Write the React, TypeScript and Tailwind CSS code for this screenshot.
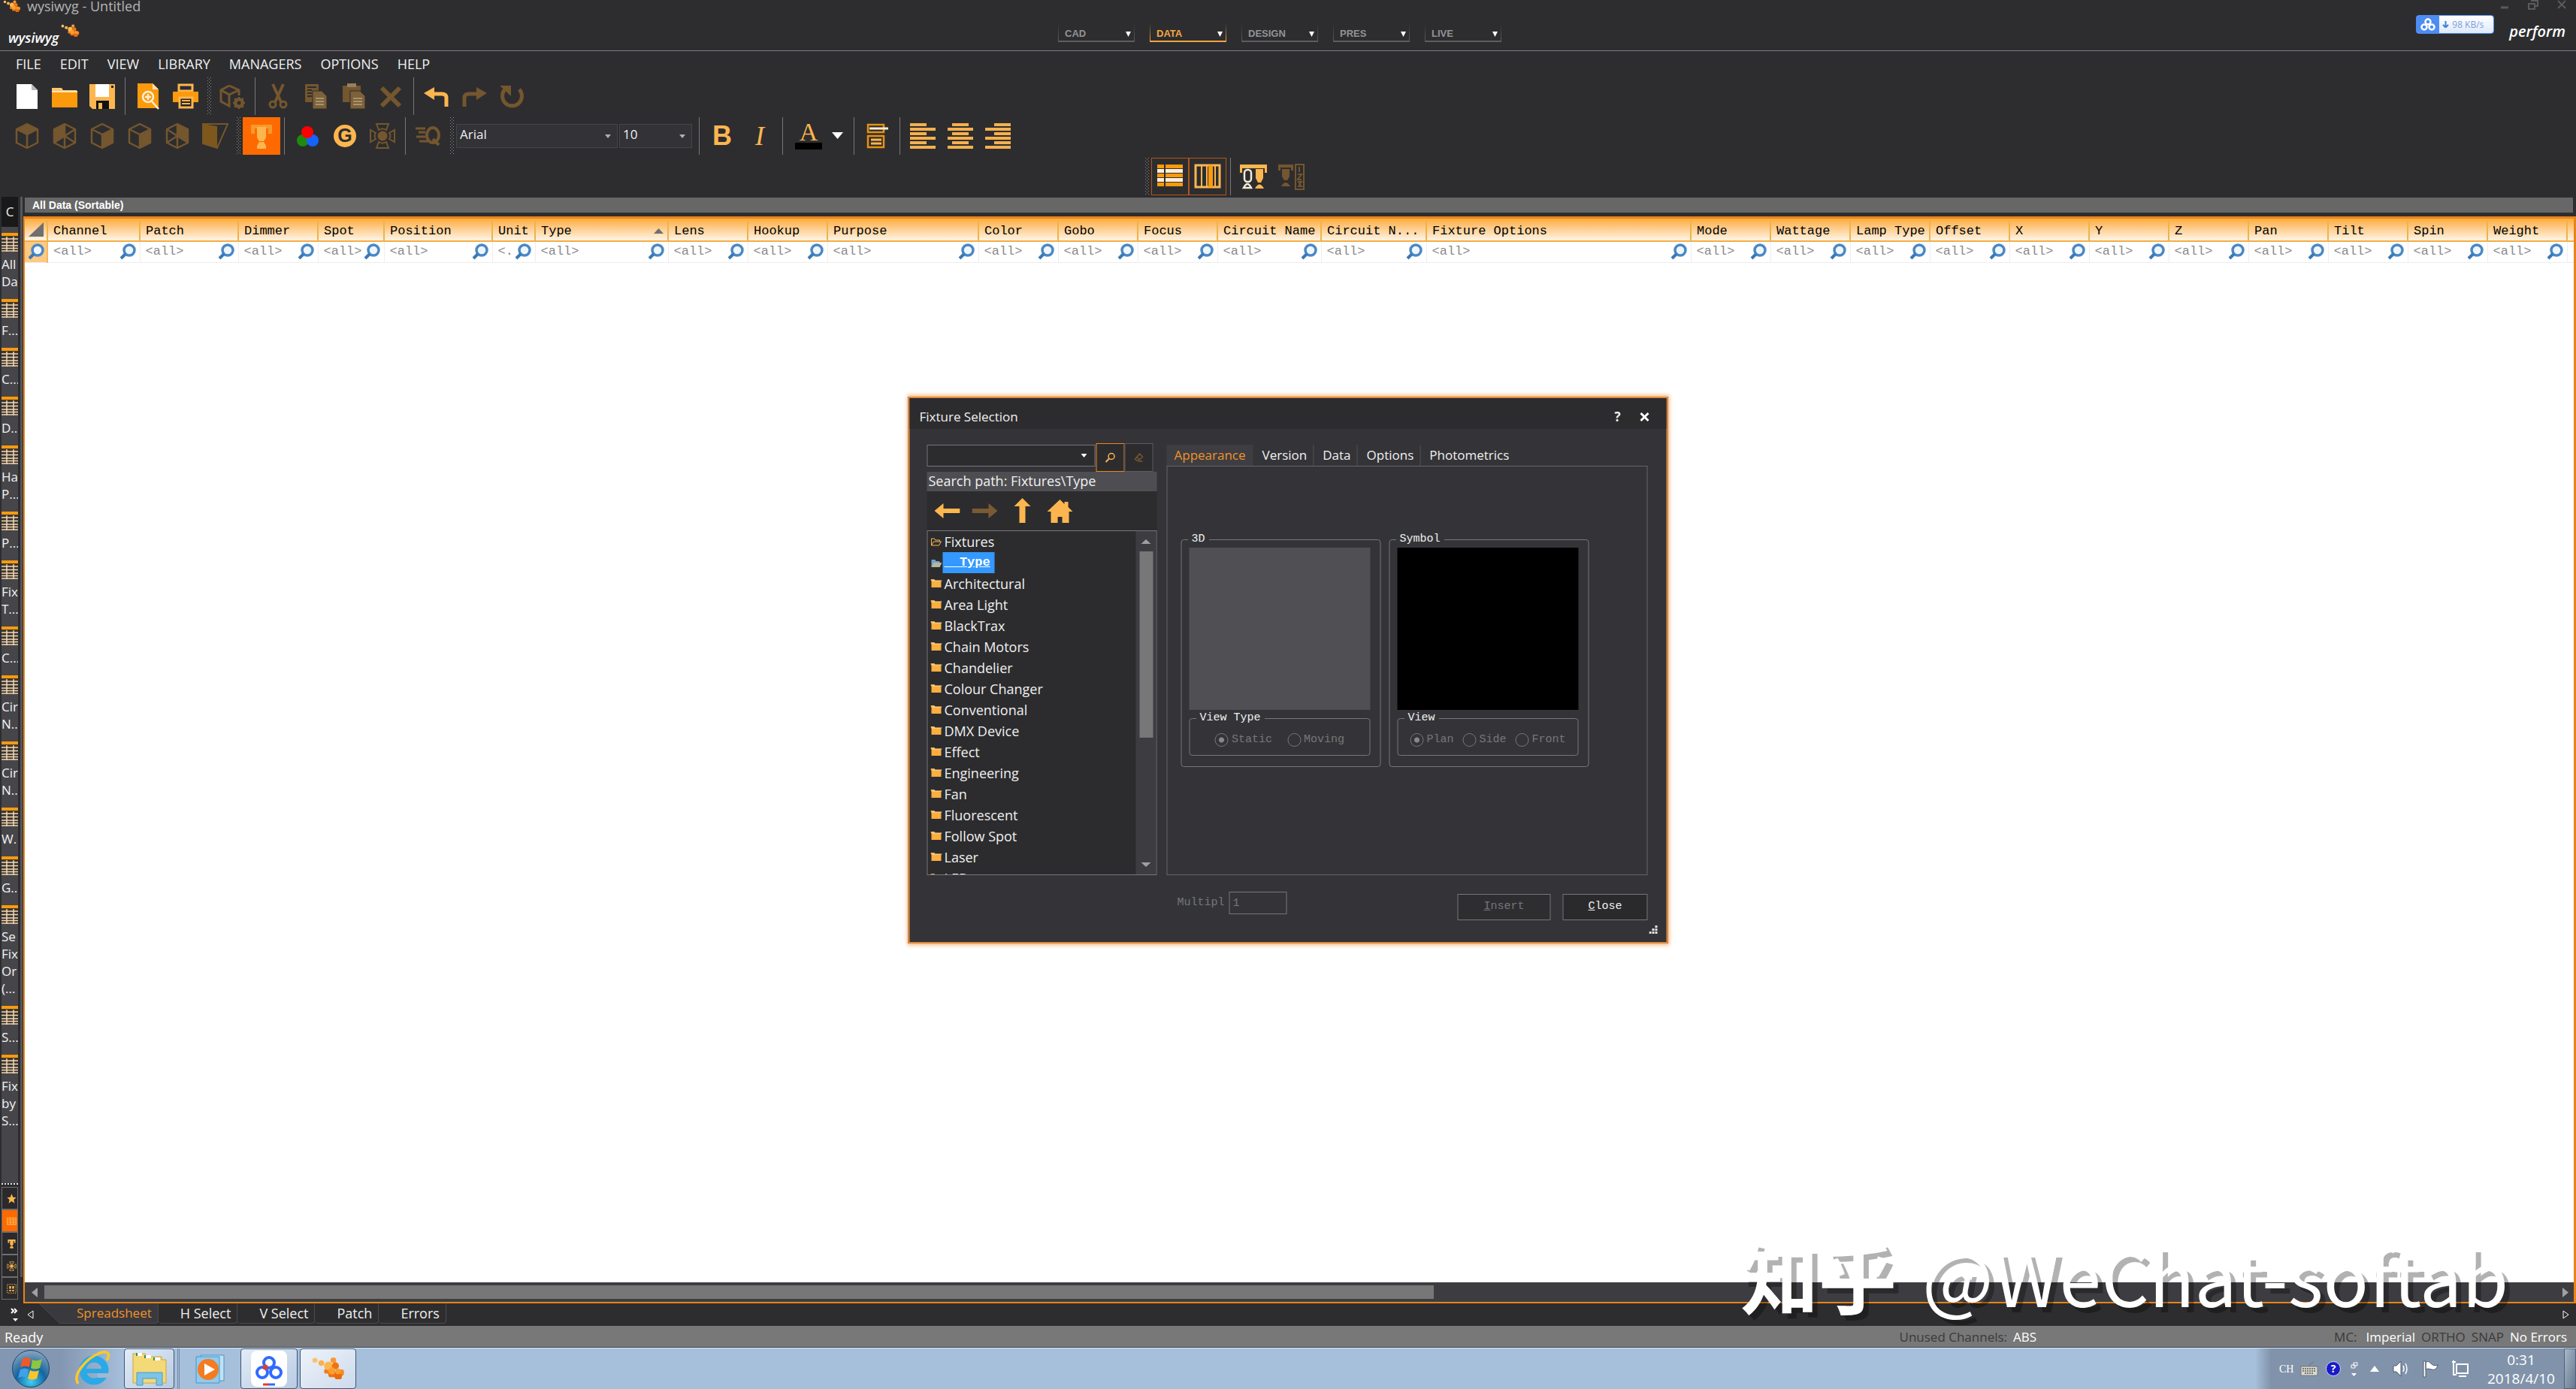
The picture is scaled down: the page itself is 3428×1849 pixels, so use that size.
import type { ReactNode } from 'react';

type Column = { label: string; width: number; filter?: string; sorted?: boolean };

const COLUMNS: Column[] = [
  { label: 'Channel', width: 123 },
  { label: 'Patch', width: 131 },
  { label: 'Dimmer', width: 106 },
  { label: 'Spot', width: 88 },
  { label: 'Position', width: 144 },
  { label: 'Unit', width: 57, filter: '<.' },
  { label: 'Type', width: 177, sorted: true },
  { label: 'Lens', width: 106 },
  { label: 'Hookup', width: 106 },
  { label: 'Purpose', width: 201 },
  { label: 'Color', width: 106 },
  { label: 'Gobo', width: 106 },
  { label: 'Focus', width: 106 },
  { label: 'Circuit Name', width: 138 },
  { label: 'Circuit N...', width: 140 },
  { label: 'Fixture Options', width: 352 },
  { label: 'Mode', width: 106 },
  { label: 'Wattage', width: 106 },
  { label: 'Lamp Type', width: 106 },
  { label: 'Offset', width: 106 },
  { label: 'X', width: 106 },
  { label: 'Y', width: 106 },
  { label: 'Z', width: 106 },
  { label: 'Pan', width: 106 },
  { label: 'Tilt', width: 106 },
  { label: 'Spin', width: 106 },
  { label: 'Weight', width: 106 },
];

const MENUS = ['FILE', 'EDIT', 'VIEW', 'LIBRARY', 'MANAGERS', 'OPTIONS', 'HELP'];
const MODES = ['CAD', 'DATA', 'DESIGN', 'PRES', 'LIVE'];
const SHORTCUTS = [
  ['All', 'Da'],
  ['F...'],
  ['C...'],
  ['D..'],
  ['Ha', 'P...'],
  ['P...'],
  ['Fix', 'T...'],
  ['C...'],
  ['Cir', 'N..'],
  ['Cir', 'N..'],
  ['W.'],
  ['G..'],
  ['Se', 'Fix', 'Or', '(...'],
  ['S...'],
  ['Fix', 'by', 'S...'],
];
const FOLDERS = [
  'Architectural',
  'Area Light',
  'BlackTrax',
  'Chain Motors',
  'Chandelier',
  'Colour Changer',
  'Conventional',
  'DMX Device',
  'Effect',
  'Engineering',
  'Fan',
  'Fluorescent',
  'Follow Spot',
  'Laser',
  'LED',
];
const SHEETS = ['H Select', 'V Select', 'Patch', 'Errors'];
const TABS = ['Version', 'Data', 'Options', 'Photometrics'];

const LIGHT = '#fdb64f';
const ORANGE = '#fb9a0c';
const DIM = '#74562f';
const DARK = '#2d2d2f';

const Svg = ({ children, size = 36, box = 36 }: { children: ReactNode; size?: number; box?: number }) => (
  <svg width={size} height={size} viewBox={`0 0 ${box} ${box}`} fill="none" aria-hidden="true">
    {children}
  </svg>
);

const Tool = ({ label, children, className = '' }: { label: string; children: ReactNode; className?: string }) => (
  <button aria-label={label} className={`flex h-[50px] w-[50px] shrink-0 items-center justify-center ${className}`}>
    {children}
  </button>
);

const Sep = () => (
  <div className="flex h-[50px] w-[11px] shrink-0 justify-center">
    <div className="w-px bg-[#77777a]" />
  </div>
);

const Grip = () => (
  <svg className="h-[50px] w-3 shrink-0" aria-hidden="true">
    <defs>
      <pattern id="grip" width="4" height="4" patternUnits="userSpaceOnUse">
        <rect width="1" height="1" fill="#88888a" />
        <rect x="2" y="2" width="1" height="1" fill="#88888a" />
      </pattern>
    </defs>
    <rect x="3" width="6" height="50" fill="url(#grip)" />
  </svg>
);

const Cube = ({ fill }: { fill: string }) => (
  <Svg>
    <path d={fill} fill={DIM} />
    <path
      d="M18 2 32 9V27L18 34 4 27V9ZM4 9 18 16 32 9M18 16V34"
      stroke={DIM}
      strokeWidth="2.5"
      strokeLinejoin="round"
    />
  </Svg>
);

const BackCube = ({ fill }: { fill: string }) => (
  <Svg>
    <path d={fill} fill={DIM} />
    <path
      d="M18 2 32 9V27L18 34 4 27V9ZM18 2V34M4 9 32 27M32 9 4 27"
      stroke={DIM}
      strokeWidth="2.5"
      strokeLinejoin="round"
    />
  </Svg>
);

const Lamp = ({ color }: { color: string }) => (
  <>
    <path d="M4 3H32V15H27V8H9V15H4Z" fill={color} />
    <path d="M12 6H24V20L21 25H15L12 20Z" fill={LIGHT} />
    <path d="M15 26H21L24 31V35H12V31Z" fill={LIGHT} />
  </>
);

const ParCan = ({ color }: { color: string }) => (
  <>
    <circle cx="18" cy="18" r="6.5" fill={color} />
    <path
      d="M10 2H26L23 10Q18 7 13 10ZM10 34H26L23 26Q18 29 13 26ZM2 10V26L9 22Q6 18 9 14ZM34 10V26L27 22Q30 18 27 14Z"
      stroke={color}
      strokeWidth="2"
    />
  </>
);

const Magnifier = () => (
  <svg width="22" height="22" viewBox="0 0 22 22" fill="none" className="shrink-0" aria-hidden="true">
    <circle cx="13" cy="9" r="7" fill="#eef6fd" stroke="#4a88c4" strokeWidth="3.5" />
    <path d="M8 14 2 20" stroke="#3c78b4" strokeWidth="4" />
  </svg>
);

const Sprinkle = ({ width, height }: { width: number; height: number }) => (
  <svg width={width} height={height} viewBox="0 0 48 34" aria-hidden="true">
    <circle cx="5" cy="5" r="3.5" fill="#fdc06a" />
    <circle cx="14" cy="9" r="4" fill="#fbb04c" />
    <circle cx="31" cy="5" r="4" fill="#f9983a" />
    <rect x="18" y="17" width="9" height="7" rx="3" fill="#f07d18" />
    <rect x="24" y="20" width="11" height="9" rx="3" fill="#ee7212" />
    <rect x="36" y="18" width="10" height="9" rx="3" fill="#f58a1f" />
    <rect x="33" y="24" width="10" height="8" rx="3" fill="#e9690c" />
    <circle cx="24" cy="13" r="6" fill="#fdb64f" />
    <circle cx="34" cy="13" r="5" fill="#ef7410" />
    <circle cx="29" cy="20" r="5" fill="#fba030" />
    <circle cx="38" cy="21" r="4" fill="#fb9a2c" />
  </svg>
);

const GridIcon = () => (
  <svg width="22" height="25" viewBox="0 0 22 25" aria-hidden="true">
    <rect width="22" height="25" fill="#3c3630" />
    <rect width="22" height="4" fill="#fb9a0c" />
    <path d="M0 8H22M0 12.500H22M0 17H22M0 20.500H22M0 24H22M7 5V25M16 5V25" stroke="#f3d9b4" strokeWidth="1.500" />
  </svg>
);

const Folder = () => (
  <svg width="15" height="12" viewBox="0 0 15 12" aria-hidden="true">
    <path d="M0 0H5L6 2H14V11H1V2H0Z" fill="#fdae3e" />
    <path d="M1 2H15" stroke="#ffe2b0" />
  </svg>
);

const Bars = ({ offsets }: { offsets: number[] }) => (
  <Svg>
    {offsets.map((x, i) => (
      <rect key={i} x={x} y={1 + i * 6} width={i % 2 ? 34 : 22} height="4" fill="#f5b04e" />
    ))}
  </Svg>
);

const TitleBar = () => (
  <header className="h-[68px] border-b border-[#7e7a82]">
    <div className="flex h-5 items-start justify-between pl-1">
      <div className="flex items-center gap-2">
        <Sprinkle width={24} height={17} />
        <h1 className="text-[18px] leading-[17px] text-[#b4b4b6]">wysiwyg - Untitled</h1>
      </div>
      <div className="flex items-center gap-6 pr-3 text-[#5b5b5e]">
        <button aria-label="Minimize">
          <Svg size={14} box={14}>
            <path d="M2 10H12" stroke="currentColor" strokeWidth="3" />
          </Svg>
        </button>
        <button aria-label="Restore">
          <Svg size={14} box={14}>
            <path d="M4 1H13V8H10M1 5H9V12H1Z" stroke="currentColor" strokeWidth="2" />
          </Svg>
        </button>
        <button aria-label="Close window">
          <Svg size={14} box={14}>
            <path d="M2 1 12 11M12 1 2 11" stroke="currentColor" strokeWidth="2" />
          </Svg>
        </button>
      </div>
    </div>
    <div className="flex h-12 items-start">
      <div className="flex w-[1408px] items-start pl-[11px] pt-3">
        <span className="pt-2 text-[18px] font-semibold italic leading-5 text-white">wysiwyg</span>
        <Sprinkle width={31} height={18} />
      </div>
      <nav aria-label="Modes" className="flex gap-5 pt-3">
        {MODES.map((mode) => (
          <button
            key={mode}
            className={`flex h-6 w-[102px] items-center justify-between border-x border-b-2 pl-2 pr-1 pt-1 font-['Liberation_Sans',sans-serif] text-[13px] font-bold ${
              mode === 'DATA'
                ? 'text-[#f5a742] [border-image:linear-gradient(to_top,#f5a742,transparent)_1]'
                : 'text-[#939395] [border-image:linear-gradient(to_top,#5e5e60,transparent)_1]'
            }`}
          >
            {mode}
            <svg width="7" height="8" viewBox="0 0 7 8" aria-hidden="true">
              <path d="M0 1H7L3.500 8Z" fill="#fff" />
            </svg>
          </button>
        ))}
      </nav>
      <div className="flex flex-1 items-start justify-end gap-5 pr-[14px]">
        <div className="flex h-[25px] w-[104px] overflow-hidden rounded-[4px] border border-[#4f8df0] bg-linear-to-b from-white to-[#dfe9fb]">
          <div className="flex w-[30px] items-center justify-center bg-[#4d8cf2]">
            <Svg size={20} box={20}>
              <circle cx="10" cy="6" r="3.500" stroke="#fff" strokeWidth="2.500" />
              <circle cx="5" cy="13" r="3.500" stroke="#fff" strokeWidth="2.500" />
              <circle cx="15" cy="13" r="3.500" stroke="#fff" strokeWidth="2.500" />
            </Svg>
          </div>
          <span className="flex items-center gap-1 pl-1 text-[12px] leading-5 text-[#7d9fd8]">
            <Svg size={9} box={9}>
              <path d="M4.500 0V8M1 5 4.500 8.500 8 5" stroke="#3a80d8" strokeWidth="2" />
            </Svg>
            98 KB/s
          </span>
        </div>
        <span className="pt-[10px] text-[20px] font-semibold italic leading-6 text-white">perform</span>
      </div>
    </div>
  </header>
);

const Toolbars = () => (
  <div className="flex h-[194px] flex-col">
    <nav aria-label="Main menu" className="flex h-[33px] items-center gap-[25px] pl-[21px]">
      {MENUS.map((item) => (
        <button key={item} className="text-[18px] leading-6 text-[#f0f0f0]">
          {item}
        </button>
      ))}
    </nav>
    <div className="flex h-[53px] items-center pl-[11px]">
      <Tool label="New">
        <Svg>
          <path d="M4 2H24L32 10V35H4Z" fill="#fff" />
          <path d="M24 2V10H32Z" fill="#b8b8b8" />
        </Svg>
      </Tool>
      <Tool label="Open">
        <Svg>
          <path d="M1 7H14L16 10H34V16H1Z" fill="#fdc46c" />
          <rect x="1" y="13" width="34" height="20" fill={ORANGE} />
          <path d="M1 12H35" stroke="#ffe6c0" strokeWidth="2" />
        </Svg>
      </Tool>
      <Tool label="Save">
        <Svg>
          <path d="M1 2H35V35H5L1 31Z" fill={LIGHT} />
          <rect x="9" y="2" width="18" height="17" fill="#fff" />
          <rect x="10" y="24" width="17" height="11" fill="#111" />
          <rect x="13" y="27" width="5" height="8" fill={LIGHT} />
          <rect x="30" y="4" width="3" height="3" fill="#222" />
        </Svg>
      </Tool>
      <Sep />
      <Tool label="Print preview">
        <Svg>
          <path d="M4 1H24L32 9V34H4Z" fill={ORANGE} />
          <path d="M24 1V9H32Z" fill="#ffe0b0" />
          <circle cx="18" cy="19" r="7" stroke="#fff0d8" strokeWidth="2.500" />
          <path d="M18 15V23M14 19H22M23 25 32 35" stroke="#fff0d8" strokeWidth="2.500" />
        </Svg>
      </Tool>
      <Tool label="Print">
        <Svg>
          <path d="M9 3H27V11H9Z" stroke={LIGHT} strokeWidth="3" />
          <path d="M1 12H35V26H1Z" fill={ORANGE} />
          <rect x="10" y="20" width="17" height="13" fill="#222" stroke={LIGHT} strokeWidth="3" />
          <path d="M13 24H24M13 28H24" stroke={LIGHT} strokeWidth="2" />
        </Svg>
      </Tool>
      <Grip />
      <Tool label="Cube options">
        <Svg>
          <path d="M14 4 27 10V17M14 4 3 10V25L14 31V16L3 10M14 16 27 10" stroke={DIM} strokeWidth="3" />
          <circle cx="27" cy="27" r="5" stroke={DIM} strokeWidth="4" />
          <path d="M27 19V35M19 27H35M21 21 33 33M33 21 21 33" stroke={DIM} strokeWidth="2" />
          <circle cx="27" cy="27" r="2.500" fill={DARK} />
        </Svg>
      </Tool>
      <Sep />
      <Tool label="Cut">
        <Svg>
          <path d="M11 2 22 26M25 2 14 26" stroke={DIM} strokeWidth="4" />
          <circle cx="11" cy="29" r="4" stroke={DIM} strokeWidth="3" />
          <circle cx="25" cy="29" r="4" stroke={DIM} strokeWidth="3" />
        </Svg>
      </Tool>
      <Tool label="Copy">
        <Svg>
          <path d="M4 2H22V26H4Z" fill={DIM} />
          <path d="M7 6H19M7 10H13M7 14H13M7 18H13" stroke={DARK} strokeWidth="2" />
          <path d="M14 11H26L33 18V35H14Z" fill="#7d6138" stroke={DARK} />
          <path d="M18 21H29M18 25H29M18 29H29" stroke="#a79372" strokeWidth="2" />
        </Svg>
      </Tool>
      <Tool label="Paste">
        <Svg>
          <path d="M4 4H28V26H4Z" fill={DIM} />
          <rect x="10" y="1" width="12" height="5" fill="#9a8058" />
          <path d="M14 11H27L34 18V35H14Z" fill="#7d6138" stroke={DARK} />
          <path d="M18 21H30M18 25H30M18 29H30" stroke="#a79372" strokeWidth="2" />
        </Svg>
      </Tool>
      <Tool label="Delete">
        <Svg>
          <path d="M6 7 30 31M30 7 6 31" stroke={DIM} strokeWidth="6" />
        </Svg>
      </Tool>
      <Sep />
      <Tool label="Undo">
        <Svg>
          <path d="M12 15H25Q31 15 31 20V32" stroke={LIGHT} strokeWidth="5" />
          <path d="M1 14 15 6V23Z" fill={LIGHT} />
        </Svg>
      </Tool>
      <Tool label="Redo">
        <Svg>
          <path d="M24 15H11Q5 15 5 20V32" stroke={DIM} strokeWidth="5" />
          <path d="M35 14 21 6V23Z" fill={DIM} />
        </Svg>
      </Tool>
      <Tool label="Refresh">
        <Svg>
          <path d="M9 9A13 13 0 1 0 28 9" stroke={DIM} strokeWidth="5" />
          <path d="M2 4H17V18Z" fill={DIM} />
        </Svg>
      </Tool>
    </div>
    <div className="flex h-[53px] items-center pl-[11px]">
      <Tool label="Top view">
        <Cube fill="M18 2 32 9 18 16 4 9Z" />
      </Tool>
      <Tool label="Back view">
        <BackCube fill="M18 2V18L4 27V9Z" />
      </Tool>
      <Tool label="Right view">
        <Cube fill="M18 16 32 9V27L18 34Z" />
      </Tool>
      <Tool label="Front view">
        <Cube fill="M18 16 32 9V27L18 34Z" />
      </Tool>
      <Tool label="Left view">
        <BackCube fill="M18 2 32 9V27L18 18Z" />
      </Tool>
      <Tool label="Isometric view">
        <Svg>
          <path d="M2 2H35L21 34L2 28Z" stroke={DIM} strokeWidth="2" />
          <path d="M2 2 21 5V34L2 28Z" fill="#7d571c" />
        </Svg>
      </Tool>
      <Grip />
      <Tool label="Fixtures" className="bg-[#ff6a00]">
        <Svg>
          <Lamp color="#f59a2c" />
        </Svg>
      </Tool>
      <Sep />
      <Tool label="Color">
        <Svg>
          <circle cx="12" cy="24" r="8" fill="#1e8a10" />
          <circle cx="25" cy="24" r="8" fill="#1463ff" />
          <circle cx="18" cy="13" r="8" fill="#f00" />
        </Svg>
      </Tool>
      <Tool label="Gobo">
        <span className="flex h-[30px] w-[30px] items-center justify-center rounded-full bg-[#fdb64f] font-['Liberation_Sans',sans-serif] text-[25px] font-bold leading-none text-[#2d2d2f]">
          G
        </span>
      </Tool>
      <Tool label="Focus">
        <Svg>
          <ParCan color={DIM} />
        </Svg>
      </Tool>
      <Sep />
      <Tool label="Quick query">
        <Svg>
          <path d="M1 8H14M5 13H14M2 19H14M6 25H18" stroke={DIM} strokeWidth="3" />
          <ellipse cx="24" cy="17" rx="8" ry="10" stroke={DIM} strokeWidth="4" />
          <path d="M24 22 32 30" stroke={DIM} strokeWidth="4" />
        </Svg>
      </Tool>
      <Grip />
      <div className="mr-1 flex gap-[2px]">
        <Combo label="Font" value="Arial" className="w-[215px]" />
        <Combo label="Font size" value="10" className="w-[97px]" />
      </div>
      <Sep />
      <Tool label="Bold" className="font-['Liberation_Sans',sans-serif] text-[36px] font-bold leading-none text-[#fdb64f]">
        B
      </Tool>
      <Tool label="Italic" className="font-['Liberation_Serif',serif] text-[36px] italic leading-none text-[#fdb64f]">
        I
      </Tool>
      <Sep />
      <Tool label="Text color" className="flex-col pl-2">
        <span className="font-['Liberation_Serif',serif] text-[34px] leading-7 text-[#fdb64f]">A</span>
        <span className="h-[9px] w-9 bg-black" />
      </Tool>
      <button aria-label="Text color menu" className="flex h-[50px] w-[34px] items-center justify-center">
        <svg width="15" height="9" viewBox="0 0 15 9" aria-hidden="true">
          <path d="M0 0H15L7.500 9Z" fill="#fff" />
        </svg>
      </button>
      <Sep />
      <Tool label="Line spacing">
        <Svg>
          <rect x="6" y="3" width="21" height="10" stroke="#e8910f" strokeWidth="2.500" />
          <path d="M8 8H33" stroke="#ffeed0" strokeWidth="3" />
          <rect x="6" y="18" width="21" height="15" stroke="#e8910f" strokeWidth="2.500" />
          <path d="M10 23H24M10 28H24" stroke={LIGHT} strokeWidth="3" />
        </Svg>
      </Tool>
      <Sep />
      <Tool label="Align left">
        <Bars offsets={[1, 1, 1, 1, 1, 1]} />
      </Tool>
      <Tool label="Align center">
        <Bars offsets={[7, 1, 7, 1, 7, 1]} />
      </Tool>
      <Tool label="Align right">
        <Bars offsets={[13, 1, 13, 1, 13, 1]} />
      </Tool>
    </div>
    <div className="flex h-[55px] items-center pl-[1520px]">
      <Grip />
      <Tool label="Rows" className="border border-[#b4561a]">
        <Svg>
          {[2, 8, 14, 20, 26].map((y, i) => (
            <rect key={y} x="1" y={y} width="34" height="5" fill={i % 2 ? '#ffeeda' : ORANGE} />
          ))}
          <path d="M11 1V33" stroke={DARK} strokeWidth="2" />
        </Svg>
      </Tool>
      <Tool label="Columns" className="border border-[#b4561a]">
        <Svg>
          <rect x="2" y="3" width="32" height="29" stroke={LIGHT} strokeWidth="3" />
          <path d="M10 3V32M17 3V32M28 3V32" stroke={LIGHT} strokeWidth="2" />
          <path d="M22 3V32" stroke={ORANGE} strokeWidth="6" />
        </Svg>
      </Tool>
      <Sep />
      <Tool label="Show fixtures">
        <Svg>
          <path d="M0 2H36V13H33V7H3V13H0Z" fill={LIGHT} />
          <rect x="6" y="9" width="9" height="16" rx="4" stroke="#f3ead8" strokeWidth="2.500" />
          <path d="M5 33Q10 23 15 33Z" stroke="#f3ead8" strokeWidth="2.500" />
          <path d="M21 8H31V20L28 26H24L21 20Z" fill={LIGHT} />
          <path d="M20 34Q26 23 32 34Z" fill={LIGHT} />
        </Svg>
      </Tool>
      <Tool label="Number fixtures">
        <Svg>
          <path d="M1 2H21V10H18V6H4V10H1Z" fill={DIM} />
          <path d="M6 8H16V18L13 23H9L6 18Z" fill={DIM} />
          <path d="M5 31Q11 21 17 31Z" fill={DIM} />
          <rect x="24" y="2" width="11" height="33" stroke={DIM} strokeWidth="2" />
          <path d="M29 5V12M27 15H32L27 22H32M27 25H32L29 28 32 31H27" stroke={DIM} strokeWidth="2" />
        </Svg>
      </Tool>
    </div>
  </div>
);

function Combo({ label, value, className }: { label: string; value: string; className: string }) {
  return (
    <div className={`relative h-8 border border-[#444449] bg-[#323237] ${className}`}>
      <select
        aria-label={label}
        defaultValue={value}
        className="h-full w-full appearance-none pl-1 pb-1 text-[17px] leading-6 text-[#f0f0f0]"
      >
        <option>{value}</option>
      </select>
      <svg className="pointer-events-none absolute right-2 top-[13px]" width="8" height="5" viewBox="0 0 8 5" aria-hidden="true">
        <path d="M0 0H8L4 5Z" fill="#b0b0b2" />
      </svg>
    </div>
  );
}

const Sidebar = () => (
  <aside className="flex w-[31px] shrink-0 pl-[2px]">
    <div className="flex w-[22px] flex-col">
      <div className="flex h-[40px] items-center justify-center bg-[#19191a] text-[17px]">C</div>
      <div className="flex flex-1 flex-col overflow-hidden bg-[#46464a] pt-2">
        {SHORTCUTS.map((lines, i) => (
          <button key={i} className="mb-3 flex flex-col gap-[5px] overflow-hidden text-left">
            <GridIcon />
            <span className="text-[17px] leading-[23px] text-[#f2f2f2]">
              {lines.map((line, j) => (
                <span key={j} className="block whitespace-nowrap">
                  {line}
                </span>
              ))}
            </span>
          </button>
        ))}
      </div>
      <div className="h-[5px] border-t-2 border-dotted border-[#e0e0e0] bg-[#2d2d2f]" />
      {['Favorites', 'Data', 'Lamps', 'Focus', 'Groups'].map((name) => (
        <button
          key={name}
          aria-label={name}
          className={`flex h-[30px] items-center justify-end border border-[#6e6e72] pr-px ${
            name === 'Data' ? 'bg-[#ff6a00]' : 'bg-[#2a2a2c]'
          }`}
        >
          <Svg size={13}>
            {name === 'Favorites' && <path d="M18 1 23 13 35 14 26 22 29 35 18 28 7 35 10 22 1 14 13 13Z" fill={LIGHT} />}
            {name === 'Data' && (
              <path d="M2 6H34V30H2ZM2 14H34M2 22H34M13 6V30M24 6V30" stroke={LIGHT} strokeWidth="3" />
            )}
            {name === 'Lamps' && <Lamp color={LIGHT} />}
            {name === 'Focus' && <ParCan color={LIGHT} />}
            {name === 'Groups' && (
              <>
                <rect x="2" y="2" width="32" height="32" stroke={LIGHT} strokeWidth="3" strokeDasharray="4 4" />
                <path d="M9 8H16V18H9ZM20 8H27V18H20ZM9 22H16V28H9ZM20 22H27V28H20Z" fill={LIGHT} />
              </>
            )}
          </Svg>
        </button>
      ))}
      <button aria-label="More" className="flex h-[35px] items-center justify-end">
        <svg width="10" height="26" viewBox="0 0 10 26" fill="none" aria-hidden="true">
          <path d="M1 7 4 10 1 13M5 7 8 10 5 13" stroke="#fff" strokeWidth="2" />
          <path d="M3 20H10L6.500 24Z" fill="#fff" />
        </svg>
      </button>
    </div>
    <div className="mb-[65px] ml-[3px] w-[3px] bg-[#57575b]" />
  </aside>
);

const Spreadsheet = () => (
  <div className="flex min-h-0 flex-1 flex-col border-2 border-r-[3px] border-t-[3px] border-[#e8841a] bg-white">
    <table className="w-full table-fixed border-collapse font-['Liberation_Mono',monospace] text-[17px]">
      <colgroup>
        <col className="w-[30px]" />
        {COLUMNS.map((c) => (
          <col key={c.label} style={{ width: c.width }} />
        ))}
        <col />
      </colgroup>
      <thead>
        <tr className="h-[30px] border-b border-[#e8ae50] bg-linear-to-b from-[#fdab35] via-[#fed093] to-[#fff5e6] text-black">
          <th className="border-r-2 border-[#eeb44a] p-0" aria-label="Select all">
            <svg width="22" height="22" viewBox="0 0 22 22" className="ml-1" aria-hidden="true">
              <path d="M21 1V20H1Z" fill="#6f6f6f" />
            </svg>
          </th>
          {COLUMNS.map((c) => (
            <th key={c.label} scope="col" className="border-r-2 border-[#eeb44a] pb-0 pl-[7px] pr-0 pt-[3px] text-left font-normal">
              <div className="flex items-center justify-between overflow-hidden whitespace-nowrap">
                {c.label}
                {c.sorted && (
                  <svg width="13" height="7" viewBox="0 0 13 7" className="mr-[5px]" aria-hidden="true">
                    <path d="M6.500 0 13 7H0Z" fill="#6f6f6f" />
                  </svg>
                )}
              </div>
            </th>
          ))}
          <th className="p-0" />
        </tr>
      </thead>
      <tbody>
        <tr className="h-[28px] border-b border-[#ececec]">
          <td className="border-r-2 border-[#f6b863] bg-[#fdc983] p-0">
            <div className="flex justify-center">
              <Magnifier />
            </div>
          </td>
          {COLUMNS.map((c) => (
            <td key={c.label} className="border-r border-[#eeeeee] py-0 pl-[7px] pr-[5px]">
              <div className="flex items-center">
                <input
                  aria-label={`Filter ${c.label}`}
                  placeholder={c.filter ?? '<all>'}
                  className="h-6 w-0 min-w-0 flex-1 text-black outline-none placeholder:text-[#8a8a8a]"
                />
                <Magnifier />
              </div>
            </td>
          ))}
          <td className="p-0" />
        </tr>
      </tbody>
    </table>
    <div className="flex-1" />
    <div className="flex h-[26px] items-center bg-[#3d3d41]">
      <div className="flex w-[26px] justify-center">
        <svg width="8" height="13" viewBox="0 0 8 13" aria-hidden="true">
          <path d="M8 0V13L0 6.500Z" fill="#a0a0a2" />
        </svg>
      </div>
      <div className="h-[18px] w-[54.5%] bg-[#777777]" />
      <div className="ml-auto flex w-[22px] justify-center">
        <svg width="8" height="13" viewBox="0 0 8 13" aria-hidden="true">
          <path d="M0 0V13L8 6.500Z" fill="#a0a0a2" />
        </svg>
      </div>
    </div>
  </div>
);

const SheetTabs = () => (
  <div className="flex h-[30px] items-start justify-between bg-[#2d2d2f]">
    <div className="flex items-start">
      <button aria-label="Previous sheets" className="flex h-[30px] w-[21px] items-center pl-1">
        <Svg size={12} box={12}>
          <path d="M9 1V11L2 6Z" stroke="#fff" />
        </Svg>
      </button>
      <svg width="28" height="27" viewBox="0 0 28 27" aria-hidden="true">
        <path d="M0 0H28V27Z" fill="#3a3a3e" />
        <path d="M0 0 28 27" stroke="#4c4c50" />
      </svg>
      <button className="h-[27px] rounded-br border-b border-r border-[#4c4c50] bg-[#3a3a3e] pl-[22px] pr-2 text-[17px] leading-6 text-[#f0922a]">
        Spreadsheet
      </button>
      {SHEETS.map((name) => (
        <button key={name} className="h-[27px] rounded-b border-b border-r border-[#4c4c50] pl-[29px] pr-2 text-[18px] leading-6 text-[#f0f0f0]">
          {name}
        </button>
      ))}
    </div>
    <button aria-label="Next sheets" className="flex h-[30px] w-5 items-center">
      <Svg size={12} box={12}>
        <path d="M3 1V11L10 6Z" stroke="#fff" />
      </Svg>
    </button>
  </div>
);

const Group = ({ title, children, className }: { title: string; children: ReactNode; className: string }) => (
  <fieldset className={`rounded-[4px] border border-[#77777a] ${className}`}>
    <legend className="ml-2 px-[5px] text-[15px] leading-[22px] text-[#efefef]">{title}</legend>
    {children}
  </fieldset>
);

const Radio = ({ name, label, checked = false }: { name: string; label: string; checked?: boolean }) => (
  <label className="flex items-center gap-1 text-[15px] leading-5 text-[#77777a]">
    <input
      type="radio"
      name={name}
      defaultChecked={checked}
      disabled
      className="h-[18px] w-[18px] appearance-none rounded-full border border-[#77777a] checked:bg-[radial-gradient(circle,#88888a_3px,transparent_4px)]"
    />
    {label}
  </label>
);

const FixtureDialog = () => (
  <section
    role="dialog"
    aria-label="Fixture Selection"
    className="absolute left-1/2 top-[528px] w-[1011px] -translate-x-1/2 border-2 border-[#e08a3a] bg-[#343438] pb-[29px] text-[17px] text-[#f0f0f0] shadow-[0_0_5px_2px_#f8b47a]"
  >
    <header className="flex h-[41px] items-center justify-between bg-[#2c2c2e] pl-[13px] pr-[22px] pt-2">
      <h2 className="leading-6">Fixture Selection</h2>
      <div className="flex items-center gap-[25px]">
        <button aria-label="Help" className="font-bold leading-6">
          ?
        </button>
        <button aria-label="Close dialog">
          <Svg size={14} box={14}>
            <path d="M2 2 12 12M12 2 2 12" stroke="#fff" strokeWidth="3" />
          </Svg>
        </button>
      </div>
    </header>
    <div className="flex gap-[13px] pl-[23px] pr-[25px] pt-[19px]">
      <div className="w-[306px] shrink-0">
        <div className="flex h-[38px] items-start">
          <div className="relative mr-px mt-[2px] h-[29px] w-[224px]">
            <input aria-label="Search fixtures" className="h-full w-full border border-[#77777a] bg-[#2c2c2e] px-1 outline-none" />
            <svg className="pointer-events-none absolute right-[11px] top-3" width="8" height="5" viewBox="0 0 8 5" aria-hidden="true">
              <path d="M0 0H8L4 5Z" fill="#fff" />
            </svg>
          </div>
          <button aria-label="Search" className="flex h-[38px] w-[38px] items-center justify-center border border-[#e8871f] bg-[#2c2c2e]">
            <Svg size={14} box={14}>
              <circle cx="8.500" cy="5.500" r="4" stroke={LIGHT} strokeWidth="1.500" />
              <path d="M5.500 8.500 1 13" stroke={LIGHT} strokeWidth="2" />
            </Svg>
          </button>
          <button aria-label="Clear search" className="flex h-[38px] w-[38px] items-center justify-center border border-[#5c5c60] bg-[#2c2c2e]">
            <Svg size={14} box={14}>
              <path d="M8 2 12 6 7 11H4L2 9ZM4 6 8 10M6 12H12" stroke={DIM} strokeWidth="1.500" />
            </Svg>
          </button>
        </div>
        <p className="h-[26px] bg-[#4e4e52] pl-[2px] text-[18px] leading-[25px]">Search path: Fixtures\Type</p>
        <div className="flex h-[52px] items-center gap-4 bg-[#2c2c2e] pl-[10px]">
          <button aria-label="Back">
            <Svg size={34} box={34}>
              <path d="M0 17 12 7V14H34V20H12V27Z" fill={LIGHT} />
            </Svg>
          </button>
          <button aria-label="Forward">
            <Svg size={34} box={34}>
              <path d="M34 17 22 7V14H0V20H22V27Z" fill="#7a5a33" />
            </Svg>
          </button>
          <button aria-label="Up">
            <Svg size={34} box={34}>
              <path d="M17 0 28 11H21V33H13V11H6Z" fill={LIGHT} />
            </Svg>
          </button>
          <button aria-label="Home">
            <Svg size={34} box={34}>
              <path d="M17 2 23 8V5H28V12L34 18H29V33H20V25H14V33H5V18H0Z" fill={LIGHT} />
            </Svg>
          </button>
        </div>
        <div className="flex h-[459px] justify-between overflow-hidden border border-[#77777a] bg-[#2c2c2e]">
          <ul className="pl-1 text-[18px] leading-[28px]">
            <li className="flex items-center gap-[3px]">
              <Svg size={15} box={15}>
                <path d="M1 12V3H5L6 5H12V7M1 12 4 7H14L11 12Z" stroke={LIGHT} />
              </Svg>
              Fixtures
            </li>
            <li className="flex items-center">
              <svg width="16" height="13" viewBox="0 0 16 13" aria-hidden="true">
                <path d="M1 12V2H6L7 4H12V6" fill="#6fa3cc" />
                <path d="M1 12 4 6H15L12 12Z" fill="#b6b6a0" />
              </svg>
              <button className="h-[28px] whitespace-pre bg-[#3399ff] pl-[2px] pr-[6px] font-['Liberation_Mono',monospace] text-[17px] font-bold leading-[28px] text-white underline">
                {'  Type'}
              </button>
            </li>
            {FOLDERS.map((name) => (
              <li key={name} className="flex h-[28px] items-center gap-[3px]">
                <Folder />
                {name}
              </li>
            ))}
          </ul>
          <div className="flex w-[27px] flex-col items-center bg-[#3d3d41]">
            <svg width="27" height="27" viewBox="0 0 27 27" aria-hidden="true">
              <path d="M7 17H20L13.500 11Z" fill="#a0a0a2" />
            </svg>
            <div className="h-[248px] w-[18px] bg-[#777777]" />
            <svg className="mt-auto" width="27" height="27" viewBox="0 0 27 27" aria-hidden="true">
              <path d="M7 11H20L13.500 17Z" fill="#a0a0a2" />
            </svg>
          </div>
        </div>
      </div>
      <div className="flex min-w-0 flex-1 flex-col pt-[2px]">
        <div role="tablist" className="flex h-[28px] leading-[26px]">
          <button role="tab" aria-selected="true" className="bg-[#3e3e42] px-[10px] text-[#f0922a]">
            Appearance
          </button>
          {TABS.map((tab) => (
            <button key={tab} role="tab" aria-selected="false" className="border-r border-[#505054] pl-3 pr-2 last:border-r-0">
              {tab}
            </button>
          ))}
        </div>
        <div className="flex flex-1 items-start gap-[11px] border border-[#66666a] pl-[18px] pt-[86px] font-['Liberation_Mono',monospace]">
          <Group title="3D" className="h-[314px] w-[266px]">
            <div className="pl-[10px]">
              <div className="h-[216px] w-[241px] bg-[#505054]" />
              <Group title="View Type" className="h-[61px] w-[241px]">
                <div className="flex justify-center gap-5 pt-2">
                  <Radio name="viewType" label="Static" checked />
                  <Radio name="viewType" label="Moving" />
                </div>
              </Group>
            </div>
          </Group>
          <Group title="Symbol" className="h-[314px] w-[266px]">
            <div className="pl-[10px]">
              <div className="h-[216px] w-[241px] bg-black" />
              <Group title="View" className="h-[61px] w-[241px]">
                <div className="flex justify-center gap-3 pt-2">
                  <Radio name="view" label="Plan" checked />
                  <Radio name="view" label="Side" />
                  <Radio name="view" label="Front" />
                </div>
              </Group>
            </div>
          </Group>
        </div>
      </div>
    </div>
    <div className="flex items-start pl-[356px] pr-[25px] pt-[22px] font-['Liberation_Mono',monospace] text-[15px]">
      <label htmlFor="multiple" className="w-[69px] overflow-hidden whitespace-nowrap leading-[30px] text-[#77777a]">
        Multipl
      </label>
      <input
        id="multiple"
        defaultValue="1"
        disabled
        className="h-[30px] w-[77px] border border-[#77777a] px-1 text-[#77777a]"
      />
      <div className="ml-auto flex gap-4 pt-[3px]">
        <button disabled className="h-[35px] w-[124px] border border-[#77777a] bg-[#2e2e31] text-[#77777a]">
          <u>I</u>nsert
        </button>
        <button className="h-[35px] w-[113px] border border-[#77777a] bg-[#2a2a2c]">
          <u>C</u>lose
        </button>
      </div>
    </div>
    <svg className="absolute bottom-[10px] right-[11px]" width="12" height="12" viewBox="0 0 12 12" aria-hidden="true">
      <path d="M8 0H11V3H8ZM8 4H11V7H8ZM8 8H11V11H8ZM4 4H7V7H4ZM4 8H7V11H4ZM0 8H3V11H0Z" fill="#e4e4e4" />
    </svg>
  </section>
);

const StatusBar = () => (
  <footer className="flex h-[29px] items-center justify-between bg-[#787878] pl-[6px] pr-3 text-[17px] leading-6 text-white">
    <span className="text-[18px]">Ready</span>
    <div className="flex items-center gap-2">
      <span className="text-[#3a3a3c]">Unused Channels:</span>
      <span className="mr-[388px]">ABS</span>
      <span className="mr-1 text-[#3a3a3c]">MC:</span>
      <span>Imperial</span>
      <span className="text-[#3a3a3c]">ORTHO</span>
      <span className="text-[#3a3a3c]">SNAP</span>
      <span>No Errors</span>
    </div>
  </footer>
);

const Taskbar = () => (
  <div className="flex h-[55px] justify-between border-t border-[#dfe9f5] bg-[#a6bfdb] shadow-[0_-1px_0_#33415a]">
    <div className="flex">
      <button aria-label="Start" className="flex w-[82px] items-center justify-center bg-[#8497b2]">
        <Svg size={52} box={52}>
          <defs>
            <radialGradient id="orb" cx="50%" cy="85%" r="80%">
              <stop offset="0" stopColor="#3fd0f5" />
              <stop offset="0.500" stopColor="#1565a0" />
              <stop offset="1" stopColor="#7f9fbc" />
            </radialGradient>
          </defs>
          <circle cx="26" cy="26" r="24.500" fill="url(#orb)" stroke="#1d4468" />
          <path d="M15 13Q21 9 26 13L24 24Q18 21 12 24Z" fill="#ef5a28" />
          <path d="M28 14Q34 17 41 13L38 25Q32 28 26 25Z" fill="#8dc63f" />
          <path d="M12 27Q18 24 23 27L21 38Q15 35 9 38Z" fill="#3fa2e8" />
          <path d="M25 28Q31 31 37 28L34 39Q28 42 22 39Z" fill="#fdc52b" />
        </Svg>
      </button>
      <button aria-label="Internet Explorer" className="flex w-[83px] items-center justify-center bg-linear-to-r from-[#8497b2] to-[#a6bfdb]">
        <Svg size={50} box={50}>
          <circle cx="26" cy="27" r="15" stroke="#2aa9e6" strokeWidth="9" />
          <path d="M14 28H43" stroke="#2aa9e6" strokeWidth="6" />
          <path d="M31 31H48V37H31Z" fill="#a1b8d4" />
          <path d="M5 45C-3 34 14 12 34 4C46 0 48 6 43 14" stroke="#f8c92c" strokeWidth="3.500" />
        </Svg>
      </button>
      <button aria-label="Explorer" className="flex w-[67px] items-center justify-center rounded border border-[#3f5470] bg-linear-to-br from-[#e3ecf7] to-[#b7cbe2]">
        <Svg size={48} box={48}>
          <path d="M2 4H18L20 8H40V12H46V43H2Z" fill="#f3d978" stroke="#c9a63c" />
          <path d="M7 5H14M18 8H26M30 11H38" stroke="#fff" strokeWidth="4" />
          <path d="M7 3V7M18 6V10M30 9V13" stroke="#3a8a50" strokeWidth="2" />
          <path d="M7 46V29H41V46H33V37H15V46Z" fill="#7cc4e8" stroke="#4d9cc8" />
        </Svg>
      </button>
      <span className="ml-1 w-[3px] border-x border-[#7488a4]" />
      <button aria-label="Media Player" className="flex w-[81px] items-center justify-center">
        <Svg size={42} box={42}>
          <path d="M8 3H39V37H8Z" fill="#bfe2f5" stroke="#4a93c4" />
          <path d="M2 5H33V40H2Z" fill="#8fcbee" stroke="#4a93c4" />
          <circle cx="18" cy="22" r="14" fill="#f47b20" />
          <path d="M13 14 27 22 13 30Z" fill="#fff" />
        </Svg>
      </button>
      <button aria-label="Netdisk" className="flex w-[76px] items-center justify-center rounded border border-[#3f5470] bg-linear-to-br from-[#e3ecf7] to-[#b7cbe2]">
        <Svg size={50} box={50}>
          <rect x="1" y="1" width="48" height="48" rx="8" fill="#fff" />
          <circle cx="25" cy="17" r="7" stroke="#2f6bff" strokeWidth="4" />
          <circle cx="16" cy="30" r="7" stroke="#2f6bff" strokeWidth="4" />
          <circle cx="34" cy="30" r="7" stroke="#2f6bff" strokeWidth="4" />
          <circle cx="20" cy="23" r="3.500" fill="#e53935" />
          <path d="M17 46H25" stroke="#e53935" strokeWidth="3" />
          <path d="M25 46H33" stroke="#2f6bff" strokeWidth="3" />
        </Svg>
      </button>
      <button aria-label="wysiwyg" className="ml-[3px] flex w-[75px] items-center justify-center rounded border border-[#3f5470] bg-linear-to-br from-[#eef3fa] to-[#ccdaeb]">
        <Sprinkle width={48} height={32} />
      </button>
    </div>
    <div className="flex items-center bg-linear-to-r from-[#a6bfdb] to-[#8193aa] to-5% pl-8 text-[19px] leading-[25px] text-white">
      <span className="w-[28px] font-['Liberation_Serif',serif] text-[14px]">CH</span>
      <div className="flex items-center gap-[10px]">
        <Svg size={24} box={24}>
          <rect x="1" y="9" width="22" height="12" fill="#d9d9d4" stroke="#77776f" />
          <path d="M3 12H21M3 15H21M6 18H18" stroke="#55554f" strokeDasharray="2 1" strokeWidth="1.500" />
          <path d="M12 9Q12 5 18 3" stroke="#77776f" />
        </Svg>
        <span className="flex h-5 w-5 items-center justify-center rounded-full border border-[#c8d0ff] bg-[#1a1ac8] text-[14px] font-bold leading-none">
          ?
        </span>
        <Svg size={24} box={24}>
          <path d="M7 4H12V8H7ZM4 7H9V11H4Z" stroke="#fff" />
          <path d="M4 18H11L7.500 22Z" fill="#fff" />
        </Svg>
      </div>
      <div className="mr-3 flex w-[137px] items-center justify-between pl-1">
        <Svg size={14} box={14}>
          <path d="M1 11H13L7 3Z" fill="#fff" />
        </Svg>
        <Svg size={24} box={24}>
          <path d="M2 8H6L12 2V22L6 16H2Z" fill="#fff" stroke="#4c5a6e" />
          <path d="M15 8Q17 12 15 16M18 5Q22 12 18 19" stroke="#fff" strokeWidth="1.500" />
        </Svg>
        <Svg size={24} box={24}>
          <path d="M3 2H6V23H3ZM6 3Q10 1 13 5T22 7Q20 15 14 13T6 13Z" fill="#fff" stroke="#4c5a6e" />
        </Svg>
        <Svg size={24} box={24}>
          <rect x="7" y="6" width="15" height="12" fill="#7d8fa6" stroke="#fff" strokeWidth="2" />
          <path d="M10 22H20M3 1V8M1 3H6M3 8V20H7" stroke="#fff" strokeWidth="2" />
        </Svg>
      </div>
      <div className="w-[114px] pt-[2px] text-center">
        <div>0:31</div>
        <div>2018/4/10</div>
      </div>
      <button aria-label="Show desktop" className="h-full w-4 border border-[#4f6078] bg-linear-to-br from-[#a9b8ca] to-[#66798f]" />
    </div>
  </div>
);

export default function App() {
  return (
    <div className="relative flex h-screen flex-col overflow-hidden bg-[#2d2d2f] font-['Open_Sans','Noto_Sans_CJK_SC',sans-serif] text-[#f0f0f0]">
      <TitleBar />
      <Toolbars />
      <main className="flex min-h-0 flex-1">
        <Sidebar />
        <div className="flex min-w-0 flex-1 flex-col">
          <h2 className="mb-[5px] ml-[2px] mr-1 mt-px h-5 bg-[#676767] pl-[10px] font-['Liberation_Sans',sans-serif] text-[14px] font-bold leading-5 text-white">
            All Data (Sortable)
          </h2>
          <Spreadsheet />
          <SheetTabs />
        </div>
      </main>
      <StatusBar />
      <Taskbar />
      <FixtureDialog />
      <div className="pointer-events-none absolute bottom-[102px] right-[90px] flex items-center gap-[34px] whitespace-nowrap font-['Noto_Sans_CJK_SC',sans-serif] leading-[100px] text-white [text-shadow:7px_7px_0_rgba(0,0,0,0.3)]">
        <span className="text-[104px] font-bold">知乎</span>
        <span className="text-[100px]">@WeChat-softab</span>
      </div>
    </div>
  );
}
